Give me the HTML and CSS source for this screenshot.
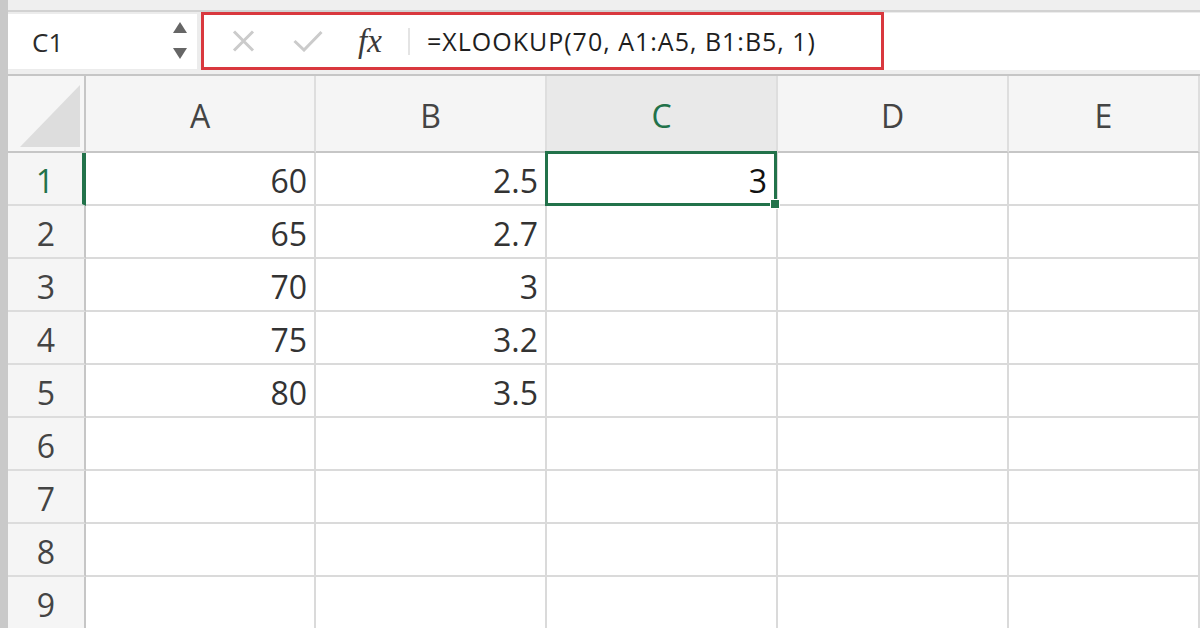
FILE: index.html
```html
<!DOCTYPE html>
<html lang="en">
<head>
<meta charset="UTF-8">
<meta name="viewport" content="width=device-width, initial-scale=1.0">
<title>XLOOKUP example</title>
<link rel="stylesheet" href="styles.css">
</head>
<body>
<div class="app">
    <div class="edge"></div>
    <div class="main">
        <div class="topbar"></div>
        <div class="formula-row">
            <div class="namebox">
                <span class="name">C1</span>
                <svg class="spinner" width="14" height="38" viewBox="0 0 14 38">
                    <path d="M0 11 L7 0 L14 11 Z" fill="#666"/>
                    <path d="M0 26 L14 26 L7 37 Z" fill="#666"/>
                </svg>
            </div>
            <div class="formula">
                <svg class="icon-cancel" width="23" height="22" viewBox="0 0 23 22">
                    <path d="M2 1.5 L21 20.5 M21 1.5 L2 20.5" stroke="#cbcbcb" stroke-width="3" fill="none"/>
                </svg>
                <svg class="icon-ok" width="30" height="22" viewBox="0 0 30 22">
                    <path d="M1.5 11 L11 20 L28.5 2" stroke="#cbcbcb" stroke-width="3" fill="none"/>
                </svg>
                <span class="fx">fx</span>
                <span class="sep"></span>
                <span class="formula-text">=XLOOKUP(70, A1:A5, B1:B5, 1)</span>
            </div>
            <div class="formula-rest"></div>
        </div>
        <div class="band"></div>

        <div class="sheet">
            <div class="corner">
                <svg width="76" height="75" viewBox="0 0 76 75">
                    <path d="M12 71 L72 9 L72 71 Z" fill="#dddddd"/>
                </svg>
            </div>
            <div class="col-head">A</div>
            <div class="col-head">B</div>
            <div class="col-head current">C</div>
            <div class="col-head">D</div>
            <div class="col-head">E</div>

            <div class="row-head current">1</div>
            <div class="cell">60</div>
            <div class="cell">2.5</div>
            <div class="cell active">3<span class="handle"></span></div>
            <div class="cell"></div>
            <div class="cell"></div>

            <div class="row-head">2</div>
            <div class="cell">65</div>
            <div class="cell">2.7</div>
            <div class="cell"></div>
            <div class="cell"></div>
            <div class="cell"></div>

            <div class="row-head">3</div>
            <div class="cell">70</div>
            <div class="cell">3</div>
            <div class="cell"></div>
            <div class="cell"></div>
            <div class="cell"></div>

            <div class="row-head">4</div>
            <div class="cell">75</div>
            <div class="cell">3.2</div>
            <div class="cell"></div>
            <div class="cell"></div>
            <div class="cell"></div>

            <div class="row-head">5</div>
            <div class="cell">80</div>
            <div class="cell">3.5</div>
            <div class="cell"></div>
            <div class="cell"></div>
            <div class="cell"></div>

            <div class="row-head">6</div>
            <div class="cell"></div>
            <div class="cell"></div>
            <div class="cell"></div>
            <div class="cell"></div>
            <div class="cell"></div>

            <div class="row-head">7</div>
            <div class="cell"></div>
            <div class="cell"></div>
            <div class="cell"></div>
            <div class="cell"></div>
            <div class="cell"></div>

            <div class="row-head">8</div>
            <div class="cell"></div>
            <div class="cell"></div>
            <div class="cell"></div>
            <div class="cell"></div>
            <div class="cell"></div>

            <div class="row-head">9</div>
            <div class="cell"></div>
            <div class="cell"></div>
            <div class="cell"></div>
            <div class="cell"></div>
            <div class="cell"></div>
        </div>
    </div>
</div>
</body>
</html>
```

FILE: styles.css
```css
body {
    margin: 0;
    font-family: "Open Sans", "Liberation Sans", sans-serif;
    color: #333;
    background: #fff;
    overflow: hidden;
}
.app {
    display: flex;
    width: 1200px;
    height: 628px;
    overflow: hidden;
}
.edge {
    width: 8px;
    flex: none;
    background: #c9c9c9;
}
.main {
    flex: 1;
    min-width: 0;
}
.topbar {
    height: 10px;
    background: #efefef;
    border-bottom: 2px solid #d2d2d2;
}
.formula-row {
    display: flex;
    height: 58px;
    background: #ececec;
}
.namebox {
    width: 189px;
    height: 55px;
    margin-top: 2px;
    background: #fff;
    display: flex;
    align-items: center;
    justify-content: space-between;
    padding: 0 10px 0 24px;
    box-sizing: border-box;
}
.name {
    font-size: 26px;
    color: #2b2b2b;
}
.spinner {
    margin-top: -2px;
}
.formula {
    width: 683px;
    height: 58px;
    margin-left: 4px;
    border: 3px solid #d9383e;
    box-sizing: border-box;
    background: #fff;
    display: flex;
    align-items: center;
    padding-left: 28px;
}
.icon-ok {
    margin-left: 38px;
}
.fx {
    width: 32px;
    margin-left: 35px;
    font-family: "Liberation Serif", serif;
    font-style: italic;
    font-size: 33px;
    color: #3a3a3a;
    line-height: 1;
}
.sep {
    width: 2px;
    height: 27px;
    margin-left: 18px;
    background: #e4e4e4;
}
.formula-text {
    margin-left: 17px;
    font-size: 25px;
    letter-spacing: 1px;
    font-weight: 500;
    color: #1e1e1e;
    white-space: nowrap;
}
.formula-rest {
    flex: 1;
    margin-top: 1px;
    background: #fff;
}
.band {
    height: 4px;
    background: #efefef;
    border-bottom: 2px solid #c6c6c6;
}
.sheet {
    display: grid;
    grid-template-columns: 78px 230px 231px 231px 231px 1fr;
    grid-template-rows: 77px repeat(9, 53px);
}
.sheet > div {
    box-sizing: border-box;
    font-size: 32px;
    font-weight: 500;
}
.corner {
    background: #f6f6f6;
    border-right: 2px solid #c6c6c6;
    border-bottom: 2px solid #c6c6c6;
}
.corner svg {
    display: block;
}
.col-head {
    background: #f5f5f5;
    border-bottom: 2px solid #c6c6c6;
    border-right: 2px solid #dedede;
    display: flex;
    align-items: center;
    justify-content: center;
    padding-top: 3px;
    color: #444;
}
.col-head.current {
    background: #e9e9e9;
    color: #22724a;
}
.row-head {
    background: #f5f5f5;
    border-right: 2px solid #c6c6c6;
    border-bottom: 2px solid #dcdcdc;
    display: flex;
    align-items: center;
    justify-content: center;
    padding-top: 4px;
    color: #444;
}
.row-head.current {
    border-right: 4px solid #22724a;
    color: #22724a;
}
.cell {
    border-right: 2px solid #dadada;
    border-bottom: 2px solid #dadada;
    display: flex;
    align-items: center;
    justify-content: flex-end;
    padding: 4px 7px 0 0;
}
.cell.active {
    position: relative;
    color: #111;
    padding-right: 9px;
}
.cell.active::after {
    content: '';
    position: absolute;
    left: -2px;
    top: -2px;
    right: -1px;
    bottom: -2px;
    border: 3px solid #22724a;
}
.handle {
    position: absolute;
    right: -4px;
    bottom: -5px;
    width: 8px;
    height: 8px;
    background: #22724a;
    border: 1px solid #fff;
    z-index: 2;
}
```
